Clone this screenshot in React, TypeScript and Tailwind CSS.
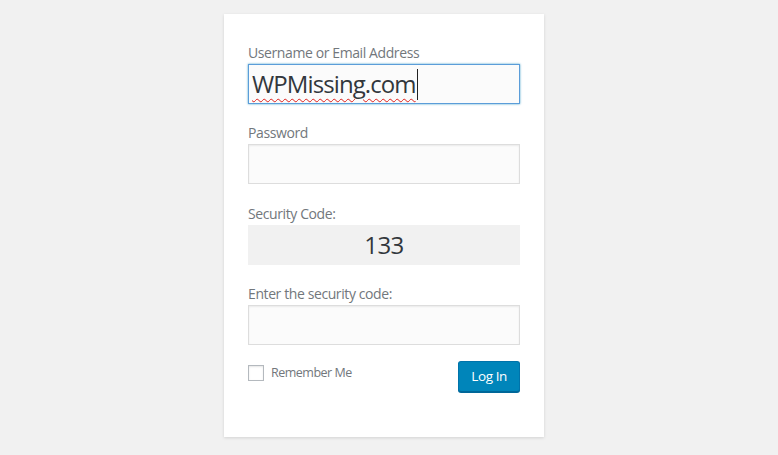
import React from 'react';

const font = { fontFamily: '"Open Sans", "Noto Sans", sans-serif' };

function Field({ label, gap = 'mb-[18px]', children }: { label: string; gap?: string; children: React.ReactNode }) {
  return (
    <div className={gap}>
      <label className="block text-[14px] leading-[21px] text-[#72777c] tracking-[-0.4px]">{label}</label>
      <div className="mt-[1px]">{children}</div>
    </div>
  );
}

export default function App() {
  return (
    <div className="min-h-[455px] w-full bg-[#f1f1f1] flex justify-center pt-[14px] pr-[10px]" style={font}>
      <form
        className="w-[320px] h-[423px] bg-white pt-[28px] px-6 shadow-[0_1px_3px_rgba(0,0,0,0.13)]"
        onSubmit={(e) => e.preventDefault()}
      >
        <Field label="Username or Email Address">
          <div className="h-10 w-full border border-[#5b9dd9] bg-[#fbfbfb] shadow-[0_0_2px_rgba(30,140,190,0.8)] px-[3px] flex items-center">
            <span className="text-[24px] leading-none text-[#32373c] tracking-[-0.9px] underline decoration-wavy decoration-[#e0201c] decoration-1 underline-offset-[5px]">
              WPMissing.com
            </span>
            <span className="ml-[1px] h-[31px] w-px bg-[#222]" />
          </div>
        </Field>
        <Field label="Password" gap="mb-[19px]">
          <div className="h-10 w-full border border-[#ddd] bg-[#fbfbfb] shadow-[inset_0_1px_2px_rgba(0,0,0,0.07)]" />
        </Field>
        <Field label="Security Code:">
          <div className="h-10 w-full bg-[#f1f1f1] flex items-center justify-center text-[24px] text-[#32373c] tracking-[-0.5px]">
            133
          </div>
        </Field>
        <Field label="Enter the security code:">
          <div className="h-10 w-full border border-[#ddd] bg-[#fbfbfb] shadow-[inset_0_1px_2px_rgba(0,0,0,0.07)]" />
        </Field>
        <div className="flex justify-between items-start mt-[-2px]">
          <label className="flex items-center gap-[7px] mt-[3px] text-[12.5px] text-[#72777c] tracking-[-0.5px]">
            <span className="w-4 h-4 border border-[#b4b9be] bg-white shadow-[inset_0_1px_2px_rgba(0,0,0,0.1)]" />
            Remember Me
          </label>
          <button
            type="submit"
            className="h-[31px] px-3 rounded-[3px] bg-[#0085ba] border border-[#0073aa] border-b-[#006799] shadow-[0_1px_0_#006799] text-white text-[13.5px] tracking-[-0.4px]"
          >
            Log In
          </button>
        </div>
      </form>
    </div>
  );
}
